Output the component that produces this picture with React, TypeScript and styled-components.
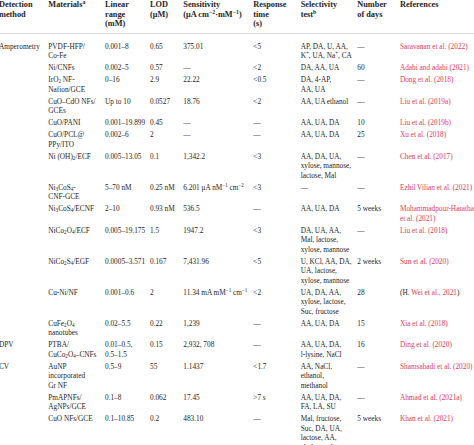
import React from "react";
import styled, { createGlobalStyle } from "styled-components";

const Global = createGlobalStyle`
  html, body { margin: 0; padding: 0; background: #ffffff; }
  body { font-family: "Liberation Serif", "Times New Roman", serif; }
`;

const Page = styled.div`
  width: 474px;
  height: 445px;
  overflow: hidden;
  background: #fff;
`;

const Table = styled.div`
  margin-left: -1px;
  width: 620px;
  color: #262425;
`;

const COLS = "49.3px 56.7px 45px 33.3px 70px 47.4px 56.6px 42.7px 220px";

const HeadRow = styled.div`
  display: grid;
  grid-template-columns: ${COLS};
  font-weight: bold;
  font-size: 8.3px;
  line-height: 9.5px;
  padding-bottom: 4.4px;
  border-bottom: 1.8px solid #dddddd;
`;

const Body = styled.div`
  padding-top: 6.6px;
`;

const Row = styled.div`
  display: grid;
  grid-template-columns: ${COLS};
  font-size: 7.3px;
  line-height: 9.45px;
  padding: 1.3px 0;
`;

const CellBox = styled.div<{ $red?: boolean }>`
  color: ${(p) => (p.$red ? "#e23a58" : "inherit")};
`;

const Line = styled.span`
  display: block;
  white-space: nowrap;
`;

const Dark = styled.span`
  color: #262425;
`;

const Sup = styled.sup`
  font-size: 0.7em;
  line-height: 0;
  vertical-align: 0.5em;
`;

const Sub = styled.sub`
  font-size: 0.7em;
  line-height: 0;
  vertical-align: -0.25em;
`;

type L = React.ReactNode;

const header: L[][] = [
  ["Detection", "method"],
  [<>Materials<Sup>a</Sup></>],
  ["Linear", "range", "(mM)"],
  ["LOD", "(μM)"],
  ["Sensitivity", <>(μA cm<Sup>−2</Sup>·mM<Sup>−1</Sup>)</>],
  ["Response", "time", "(s)"],
  ["Selectivity", <>test<Sup>b</Sup></>],
  ["Number", "of days"],
  ["References"],
];

interface RowData {
  cells: L[][];
  ref: L[];
}

const rows: RowData[] = [
  {
    cells: [["Amperometry"], ["PVDF-HFP/", "Co-Fe"], ["0.001–8"], ["0.65"], ["375.01"], ["<5"],
      ["AP, DA, U, AA,", <>K<Sup>+</Sup>, UA, Na<Sup>+</Sup>, CA</>], ["—"]],
    ref: ["Saravanan et al. (2022)"],
  },
  {
    cells: [[], ["Ni/CNFs"], ["0.002–5"], ["0.57"], ["—"], ["<2"], ["DA, AA, UA"], ["60"]],
    ref: ["Adabi and adabi (2021)"],
  },
  {
    cells: [[], [<>IrO<Sub>2</Sub> NF-</>, "Nafion/GCE"], ["0–16"], ["2.9"], ["22.22"], ["<0.5"],
      ["DA, 4-AP,", "AA, UA"], ["—"]],
    ref: ["Dong et al. (2018)"],
  },
  {
    cells: [[], ["CuO–CdO NFs/", "GCEs"], ["Up to 10"], ["0.0527"], ["18.76"], ["<2"], ["AA, UA ethanol"], ["—"]],
    ref: ["Liu et al. (2019a)"],
  },
  {
    cells: [[], ["CuO/PANI"], ["0.001–19.899"], ["0.45"], ["—"], ["—"], ["AA, UA, DA"], ["10"]],
    ref: ["Liu et al. (2019b)"],
  },
  {
    cells: [[], ["CuO/PCL@", "PPy/ITO"], ["0.002–6"], ["2"], ["—"], ["—"], ["AA, UA, DA"], ["25"]],
    ref: ["Xu et al. (2018)"],
  },
  {
    cells: [[], [<>Ni (OH)<Sub>2</Sub>/ECF</>], ["0.005–13.05"], ["0.1"], ["1,342.2"], ["<3"],
      ["AA, DA, UA,", "xylose, mannose,", "lactose, Mal"], ["—"]],
    ref: ["Chen et al. (2017)"],
  },
  {
    cells: [[], [<>Ni<Sub>3</Sub>CoS<Sub>4</Sub>-</>, "CNF-GCE"], ["5–70 nM"], ["0.25 nM"],
      [<>6.201 μA nM<Sup>−1</Sup> cm<Sup>−2</Sup></>], ["<3"], ["—"], ["—"]],
    ref: ["Ezhil Vilian et al. (2021)"],
  },
  {
    cells: [[], [<>Ni<Sub>3</Sub>CoS<Sub>4</Sub>/ECNF</>], ["2–10"], ["0.93 nM"], ["536.5"], ["—"],
      ["AA, UA, DA"], ["5 weeks"]],
    ref: ["Mohammadpour-Haratbar", "et al. (2021)"],
  },
  {
    cells: [[], [<>NiCo<Sub>2</Sub>O<Sub>4</Sub>/ECF</>], ["0.005–19.175"], ["1.5"], ["1947.2"], ["<3"],
      ["DA, UA, AA,", "Mal, lactose,", "xylose, mannose"], ["—"]],
    ref: ["Liu et al. (2018)"],
  },
  {
    cells: [[], [<>NiCo<Sub>2</Sub>S<Sub>4</Sub>/EGF</>], ["0.0005–3.571"], ["0.167"], ["7,431.96"], ["<5"],
      ["U, KCl, AA, DA,", "UA, lactose,", "xylose, mannose"], ["2 weeks"]],
    ref: ["Sun et al. (2020)"],
  },
  {
    cells: [[], ["Cu-Ni/NF"], ["0.001–0.6"], ["2"], [<>11.34 mA mM<Sup>−1</Sup> cm<Sup>−1</Sup></>], ["<2"],
      ["UA, DA, AA,", "xylose, lactose,", "Suc, fructose"], ["28"]],
    ref: [<><Dark>(H. </Dark>Wei et al., 2021<Dark>)</Dark></>],
  },
  {
    cells: [[], [<>CuFe<Sub>2</Sub>O<Sub>4</Sub></>, "nanotubes"], ["0.02–5.5"], ["0.22"], ["1,239"], ["—"],
      ["AA, UA, DA"], ["15"]],
    ref: ["Xia et al. (2018)"],
  },
  {
    cells: [["DPV"], ["PTBA/", <>CuCo<Sub>2</Sub>O<Sub>4</Sub>–CNFs</>], ["0.01–0.5,", "0.5–1.5"], ["0.15"],
      ["2,932, 708"], ["—"], ["AA, UA, DA,", "l-lysine, NaCl"], ["16"]],
    ref: ["Ding et al. (2020)"],
  },
  {
    cells: [["CV"], ["AuNP", "incorporated", "Gr NF"], ["0.5–9"], ["55"], ["1.1437"], ["<1.7"],
      ["AA, NaCl,", "ethanol,", "methanol"], ["—"]],
    ref: ["Shamsabadi et al. (2020)"],
  },
  {
    cells: [[], ["PmAPNFs/", "AgNPs/GCE"], ["0.1–8"], ["0.062"], ["17.45"], [">7 s"],
      ["AA, UA, DA,", "FA, LA, SU"], ["—"]],
    ref: ["Ahmad et al. (2021a)"],
  },
  {
    cells: [[], ["CuO NFs/GCE"], ["0.1–10.85"], ["0.2"], ["483.10"], ["—"],
      ["Mal, fructose,", "Suc, DA, UA,", "lactose, AA,", "cholesterol"], ["5 weeks"]],
    ref: ["Khan et al. (2021)"],
  },
];

const Cell: React.FC<{ lines: L[]; red?: boolean }> = ({ lines, red }) => (
  <CellBox $red={red}>
    {lines.map((l, i) => (
      <Line key={i}>{l}</Line>
    ))}
  </CellBox>
);

export default function App() {
  return (
    <>
      <Global />
      <Page>
        <Table>
          <HeadRow>
            {header.map((h, i) => (
              <Cell key={i} lines={h} />
            ))}
          </HeadRow>
          <Body>
            {rows.map((r, i) => (
              <Row key={i}>
                {r.cells.map((c, j) => (
                  <Cell key={j} lines={c} />
                ))}
                <Cell lines={r.ref} red />
              </Row>
            ))}
          </Body>
        </Table>
      </Page>
    </>
  );
}
